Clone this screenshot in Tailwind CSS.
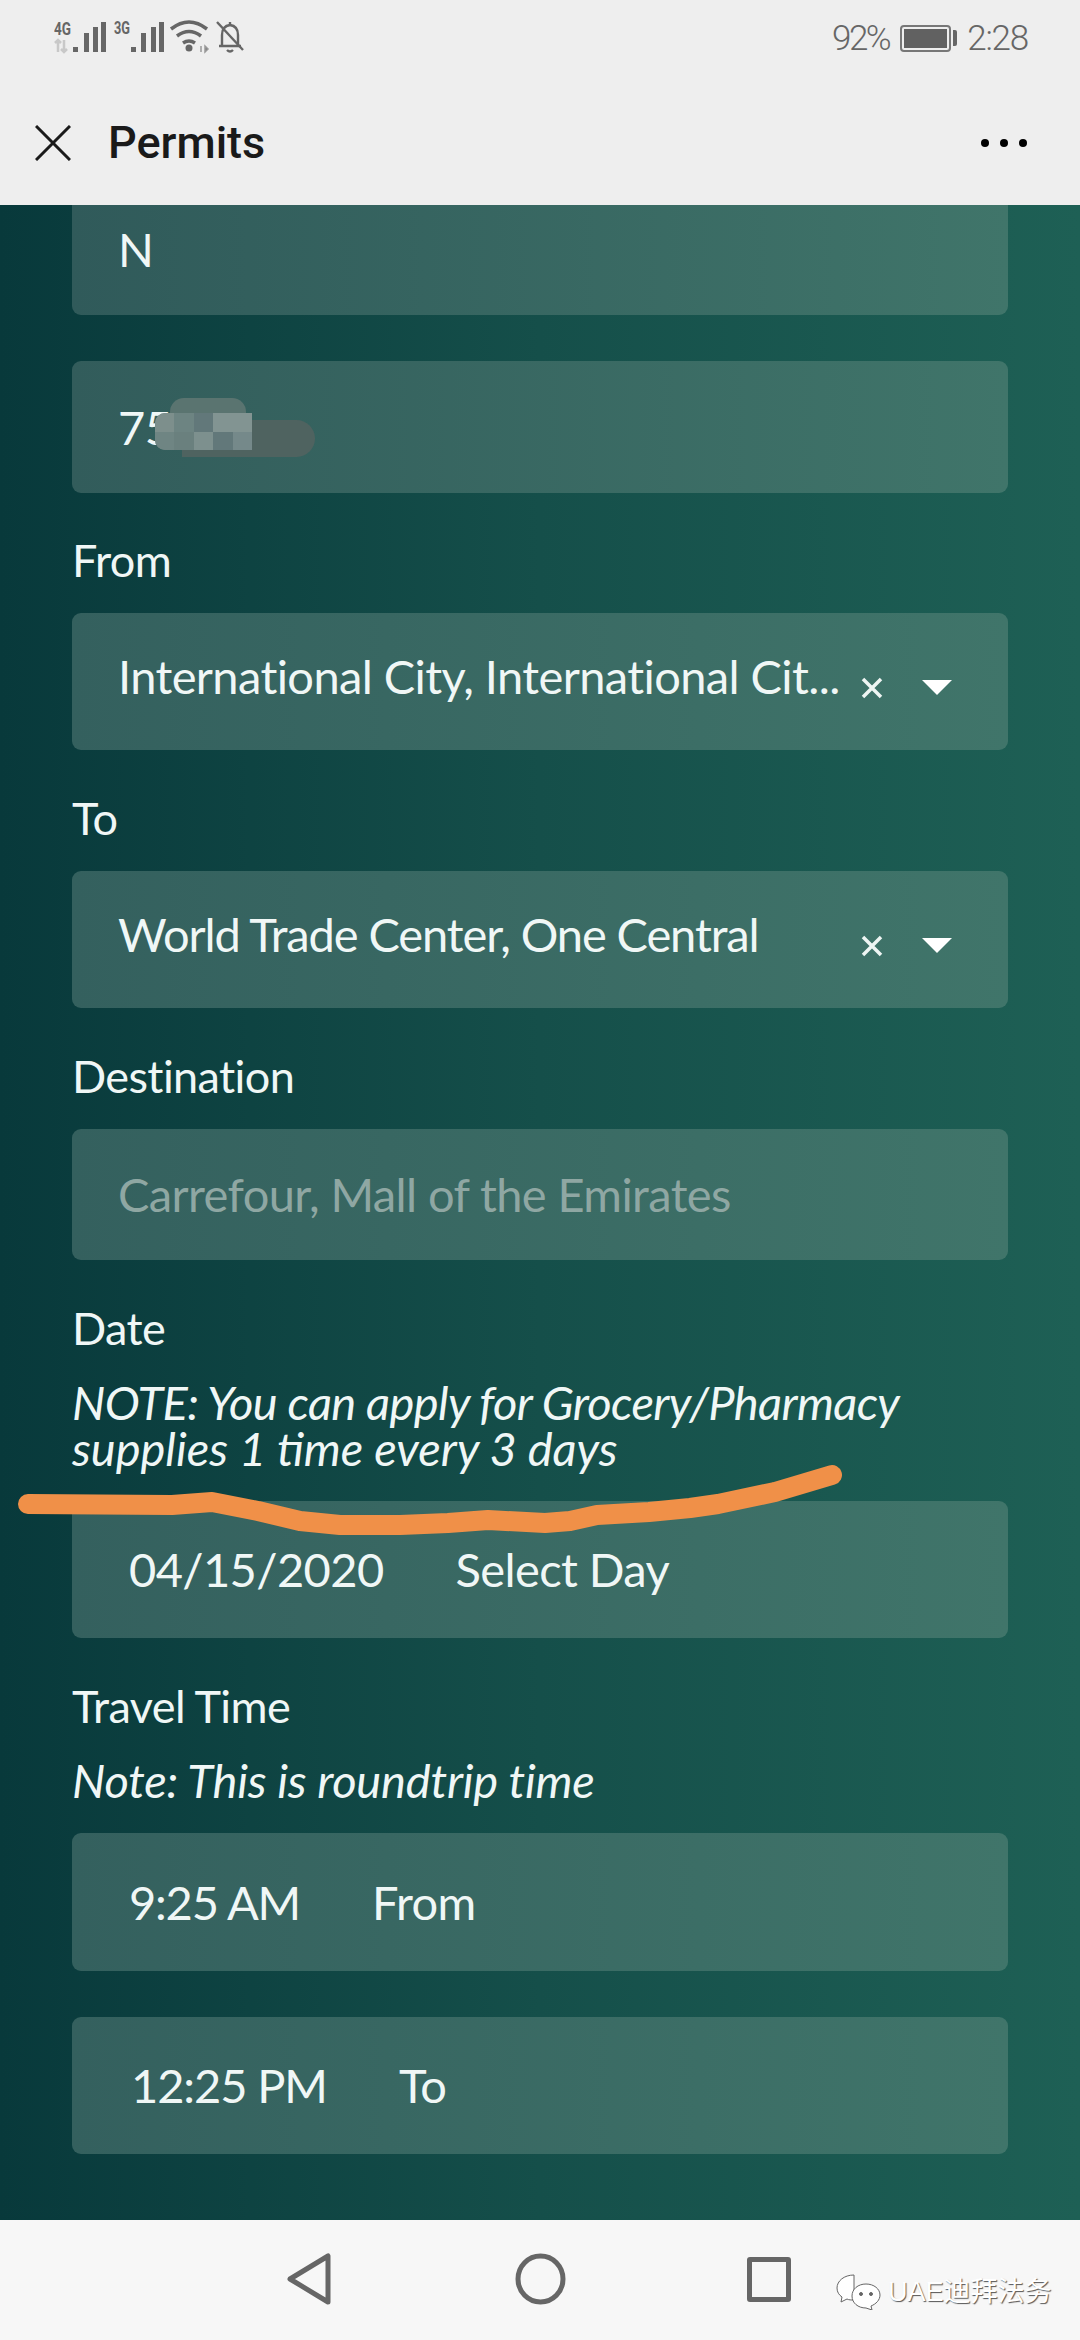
<!DOCTYPE html>
<html lang="en">
<head>
    <meta charset="UTF-8">
    <title>Permits</title>
    <script src="https://cdn.jsdelivr.net/npm/@tailwindcss/browser@4"></script>
</head>
<body class="w-[1080px] h-[2340px] overflow-hidden flex flex-col bg-[#f7f7f7] font-['Lato',sans-serif]">

<!-- Status bar + title bar -->
<header class="h-[205px] shrink-0 bg-[#eeeeee] flex flex-col">
    <div class="h-[76px] flex items-center pl-[54px] pr-[52px] text-[#666666]">
        <svg width="196" height="40" viewBox="0 0 196 40">
            <text x="0" y="17" font-family="Roboto" font-size="18" font-weight="700" fill="#666" textLength="17" lengthAdjust="spacingAndGlyphs">4G</text>
            <g fill="none" stroke="#c8c8c8" stroke-width="2.5"><path d="M4 34V22M1 25l3-3 3 3M10 22v12M7 31l3 3 3-3"/></g>
            <g fill="#666"><rect x="19" y="29" width="5" height="5"/><rect x="30" y="15" width="5" height="19"/><rect x="39" y="9" width="5" height="25"/><rect x="47" y="4" width="5" height="30"/></g>
            <text x="60" y="16" font-family="Roboto" font-size="18" font-weight="700" fill="#666" textLength="16" lengthAdjust="spacingAndGlyphs">3G</text>
            <g fill="#666"><rect x="77" y="29" width="5" height="5"/><rect x="87" y="15" width="5" height="19"/><rect x="97" y="9" width="5" height="25"/><rect x="105" y="4" width="5" height="30"/></g>
            <g fill="none" stroke="#666" stroke-width="3.5"><path d="M117 11q18-14 36 0"/><path d="M123 18q12-9 24 0"/><path d="M129 25q6-4 12 0"/></g>
            <circle cx="135" cy="30" r="3.5" fill="#666"/>
            <path d="M147 28v6M151 28l3 3-3 3z" fill="#777" stroke="#999" stroke-width="1.5"/>
            <g fill="none" stroke="#666" stroke-width="2.4"><path d="M168 28v-11q0-9 8-10q8 1 8 10v11h3h-22"/><path d="M173 32q3 3 6 0"/><path d="M176 7v-3"/><path d="M163 4l26 28"/></g>
        </svg>
        <span class="ml-auto text-[35px] tracking-[-2.5px] font-['Roboto',sans-serif] font-light text-[#666666] leading-none">92%</span>
        <div class="ml-[11px] flex items-center">
            <div class="w-[51px] h-[27px] border-2 border-[#777777] rounded-[4px] p-[2px]"><div class="w-full h-full bg-[#616161]"></div></div>
            <div class="ml-[2px] w-[4px] h-[16px] bg-[#666666] rounded-r-[2px]"></div>
        </div>
        <span class="ml-[10px] text-[35px] tracking-[-1.2px] font-['Roboto',sans-serif] font-light text-[#666666] leading-none">2:28</span>
    </div>
    <div class="flex-1 flex items-center pl-[35px] pr-[53px] pt-[4px]">
        <svg width="36" height="36" viewBox="0 0 36 36" fill="none" stroke="#1a1a1a" stroke-width="3"><path d="M1 1l34 34M35 1L1 35"/></svg>
        <h1 class="ml-[37px] text-[45px] font-medium font-['Roboto',sans-serif] text-[#1a1a1a] leading-none">Permits</h1>
        <div class="ml-auto flex gap-[11px]">
            <span class="w-2 h-2 rounded-full bg-black"></span>
            <span class="w-2 h-2 rounded-full bg-black"></span>
            <span class="w-2 h-2 rounded-full bg-black"></span>
        </div>
    </div>
</header>

<!-- Form -->
<main class="relative flex-1 overflow-hidden px-[72px] bg-gradient-to-r from-[#08393b] via-[#154f4a] via-50% to-[#1e6055] text-[#f0f7f6] text-[47px] tracking-[-0.6px]">
    <div class="-mt-[22px] h-[132px] rounded-[9px] bg-gradient-to-r from-[#305a5a] to-[#40756a] flex items-center px-[46px]">N</div>

    <div class="relative mt-[46px] h-[132px] rounded-[9px] bg-gradient-to-r from-[#325c5b] to-[#40756a] flex items-center px-[46px]">
        75
        <div class="absolute left-[110px] top-[59px] w-[133px] h-[37px] rounded-r-[20px] bg-[#4f6360]"></div>
        <div class="absolute left-[98px] top-[37px] w-[76px] h-[20px] rounded-t-[14px] bg-[#5a7470]"></div>
        <div class="absolute left-[83px] top-[52px] w-[97px] h-[37px] rounded-l-[10px] bg-[#6f8583] overflow-hidden grid grid-cols-5">
            <div class="bg-[#7d8f8c]"></div><div class="bg-[#6d8482]"></div><div class="bg-[#62787a]"></div><div class="bg-[#829492]"></div><div class="bg-[#829492]"></div>
            <div class="bg-[#6f8583]"></div><div class="bg-[#6a807e]"></div><div class="bg-[#7d908e]"></div><div class="bg-[#62787a]"></div><div class="bg-[#75898a]"></div>
        </div>
    </div>

    <label class="block mt-[44px] mb-[30px] text-[45px] leading-[46px]">From</label>
    <div class="h-[137px] rounded-[9px] bg-gradient-to-r from-[#34605e] to-[#40756a] flex items-center pl-[46px] pr-[56px]">
        <span class="-mt-[11px]">International City, International Cit...</span>
        <svg class="ml-auto mt-[12px]" width="22" height="22" viewBox="0 0 22 22" stroke="#eef5f3" stroke-width="3.5"><path d="M2 2l18 18M20 2L2 20"/></svg>
        <span class="ml-[39px] mt-[12px] w-0 h-0 border-x-[15px] border-x-transparent border-t-[15px] border-t-white"></span>
    </div>

    <label class="block mt-[45px] mb-[30px] text-[45px] leading-[46px]">To</label>
    <div class="h-[137px] rounded-[9px] bg-gradient-to-r from-[#34605e] to-[#40756a] flex items-center pl-[46px] pr-[56px]">
        <span class="-mt-[11px] tracking-[-1.1px]">World Trade Center, One Central</span>
        <svg class="ml-auto mt-[12px]" width="22" height="22" viewBox="0 0 22 22" stroke="#eef5f3" stroke-width="3.5"><path d="M2 2l18 18M20 2L2 20"/></svg>
        <span class="ml-[39px] mt-[12px] w-0 h-0 border-x-[15px] border-x-transparent border-t-[15px] border-t-white"></span>
    </div>

    <label class="block mt-[45px] mb-[30px] text-[45px] leading-[46px]">Destination</label>
    <div class="h-[131px] rounded-[9px] bg-gradient-to-r from-[#34605e] to-[#40756a] flex items-center px-[46px] text-[#8fa7a3]">Carrefour, Mall of the Emirates</div>

    <label class="block mt-[45px] text-[45px] leading-[46px]">Date</label>
    <p class="mt-[28px] mb-[30px] italic leading-[46px]">NOTE: You can apply for Grocery/Pharmacy<br><span class="tracking-normal">supplies 1 time every 3 days</span></p>
    <div class="h-[137px] rounded-[9px] bg-gradient-to-r from-[#34605e] to-[#40756a] flex items-center pl-[57px] gap-[72px]">
        <span>04/15/2020</span><span>Select Day</span>
    </div>

    <label class="block mt-[45px] text-[45px] leading-[46px]">Travel Time</label>
    <p class="mt-[28px] mb-[30px] italic leading-[46px] tracking-[-0.2px]">Note: This is roundtrip time</p>
    <div class="h-[138px] rounded-[9px] bg-gradient-to-r from-[#34605e] to-[#40756a] flex items-center pl-[57px] gap-[72px]">
        <span class="tracking-[-1.2px]">9:25 AM</span><span>From</span>
    </div>
    <div class="mt-[46px] h-[137px] rounded-[9px] bg-gradient-to-r from-[#34605e] to-[#40756a] flex items-center pl-[59px] gap-[72px]">
        <span class="tracking-[-1.1px]">12:25 PM</span><span>To</span>
    </div>

    <!-- hand drawn underline -->
    <svg class="absolute left-0 top-0" width="1080" height="2015" fill="none" stroke="#f09048" stroke-width="20" stroke-linecap="round" stroke-linejoin="round">
        <path d="M28 1299L172 1300L212 1297L258 1306L300 1316L340 1320L400 1320L448 1318L488 1315L545 1318L570 1316L597 1310L649 1307L690 1303L718 1299L775 1287L832 1270"/>
    </svg>
</main>

<!-- Navigation bar -->
<footer class="relative h-[120px] shrink-0 bg-[#f7f7f7] flex items-center pl-[287px] pb-[2px]">
    <svg width="44" height="52" viewBox="0 0 44 52" fill="none" stroke="#666666" stroke-width="5" stroke-linejoin="round"><path d="M41 3v46L3 26z"/></svg>
    <svg class="ml-[184px]" width="51" height="52" viewBox="0 0 51 52" fill="none" stroke="#666666" stroke-width="5"><ellipse cx="25.5" cy="26" rx="22.5" ry="23"/></svg>
    <div class="ml-[181px] w-[44px] h-[45px] border-[5px] border-[#666666] rounded-[3px]"></div>
    <!-- watermark -->
    <div class="absolute left-[836px] top-[54px] flex items-center">
        <svg width="46" height="36" viewBox="0 0 46 36" fill="#fff" stroke="#666" stroke-width="1"><path d="M18 1C8 1 1 7 1 14c0 4 2 7 5 9l-1 5 6-3c2 1 4 1 7 1z"/><path d="M30 10c-8 0-14 5-14 12s6 12 14 12l6 2-1-4c5-2 9-6 9-11 0-6-6-11-14-11z"/><circle cx="25" cy="20" r="1.5" fill="#666"/><circle cx="35" cy="20" r="1.5" fill="#666"/></svg>
        <span class="ml-[6px] text-[27px] leading-none text-white font-['Liberation_Sans','Noto_Sans_CJK_SC',sans-serif] [text-shadow:1px_1px_1px_#555]">UAE迪拜法务</span>
    </div>
</footer>

</body>
</html>
